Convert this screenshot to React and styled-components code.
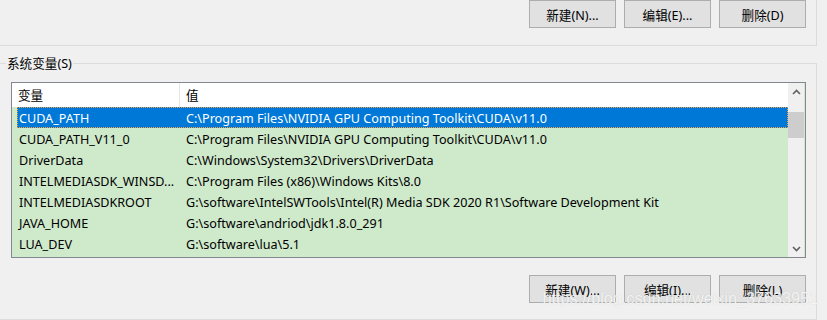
import React from 'react';
import styled, { createGlobalStyle } from 'styled-components';

const GlobalStyle = createGlobalStyle`
  html, body {
    margin: 0;
    padding: 0;
    background: #f0f0f0;
    overflow: hidden;
  }
  body {
    font-family: "Noto Sans", "Noto Sans CJK SC", sans-serif;
    font-size: 12.6px;
    color: #000;
  }
`;

const rows = [
    { name: 'CUDA_PATH', value: 'C:\\Program Files\\NVIDIA GPU Computing Toolkit\\CUDA\\v11.0', selected: true },
    { name: 'CUDA_PATH_V11_0', value: 'C:\\Program Files\\NVIDIA GPU Computing Toolkit\\CUDA\\v11.0' },
    { name: 'DriverData', value: 'C:\\Windows\\System32\\Drivers\\DriverData' },
    { name: 'INTELMEDIASDK_WINSD...', value: 'C:\\Program Files (x86)\\Windows Kits\\8.0' },
    { name: 'INTELMEDIASDKROOT', value: 'G:\\software\\IntelSWTools\\Intel(R) Media SDK 2020 R1\\Software Development Kit' },
    { name: 'JAVA_HOME', value: 'G:\\software\\andriod\\jdk1.8.0_291' },
    { name: 'LUA_DEV', value: 'G:\\software\\lua\\5.1' },
];

const App = () => {
    return (
        <>
        <GlobalStyle />
        <Page>
            <UserSection>
                <ButtonRow>
                    <Button>新建(N)...</Button>
                    <Button>编辑(E)...</Button>
                    <Button>删除(D)</Button>
                </ButtonRow>
            </UserSection>

            <GroupBox>
                <Legend>系统变量(S)</Legend>
                <ListView>
                    <ListBody>
                        <Header>
                            <HeaderCell $width={168} $divider>变量</HeaderCell>
                            <HeaderCell>值</HeaderCell>
                        </Header>
                        {rows.map((r) => (
                            <Row key={r.name} $selected={r.selected}>
                                <NameCell>{r.name}</NameCell>
                                <ValueCell>{r.value}</ValueCell>
                            </Row>
                        ))}
                    </ListBody>
                    <ScrollBar>
                        <Arrow>
                            <svg width="9" height="6" viewBox="0 0 9 6">
                                <path d="M1 5 L4.5 1.5 L8 5" fill="none" stroke="#606060" strokeWidth="1.6" />
                            </svg>
                        </Arrow>
                        <Track>
                            <Thumb />
                        </Track>
                        <Arrow>
                            <svg width="9" height="6" viewBox="0 0 9 6">
                                <path d="M1 1 L4.5 4.5 L8 1" fill="none" stroke="#606060" strokeWidth="1.6" />
                            </svg>
                        </Arrow>
                    </ScrollBar>
                </ListView>
                <ButtonRow $bottom>
                    <Button>新建(W)...</Button>
                    <Button>编辑(I)...</Button>
                    <Button>删除(L)</Button>
                </ButtonRow>
            </GroupBox>
            <Watermark>https://blog.csdn.net/weixin_37633951</Watermark>
        </Page>
        </>
    )
}

export default App

const Page = styled.div`
  position: relative;
  width: 827px;
  height: 320px;
`;

const UserSection = styled.div`
  box-sizing: border-box;
  width: 817px;
  height: 46px;
  border-right: 1px solid #dcdcdc;
  border-bottom: 1px solid #dcdcdc;
  padding-right: 10px;
`;

const ButtonRow = styled.div`
  display: flex;
  justify-content: flex-end;
  gap: 8px;
  margin-top: ${(p) => (p.$bottom ? '17px' : '0')};
`;

const Button = styled.button`
  box-sizing: border-box;
  width: 87px;
  height: 28px;
  margin: 0;
  padding: 0;
  background: #e1e1e1;
  border: 1px solid #adadad;
  font-family: "Noto Sans", "Noto Sans CJK SC", sans-serif;
  font-size: 12.6px;
  color: #000;
`;

const GroupBox = styled.fieldset`
  box-sizing: border-box;
  width: 819px;
  height: 265px;
  margin: 9px 0 0 -2px;
  padding: 10px 10px 0 12px;
  border: 1px solid #dcdcdc;
  min-inline-size: 0;
`;

const Legend = styled.legend`
  padding: 0 1px;
  margin-left: -5px;
  line-height: 17px;
  font-size: 12.6px;
`;

const ListView = styled.div`
  box-sizing: border-box;
  display: flex;
  width: 795px;
  height: 176px;
  border: 1px solid #828790;
  background: #cfe9cb;
  padding-right: 1px;
`;

const ListBody = styled.div`
  flex: 1;
  overflow: hidden;
`;

const Header = styled.div`
  display: flex;
  height: 24px;
  background: #fff;
`;

const HeaderCell = styled.div`
  box-sizing: border-box;
  flex: ${(p) => (p.$width ? `0 0 ${p.$width}px` : '1')};
  padding: 1px 0 0 6px;
  line-height: 23px;
  border-right: ${(p) => (p.$divider ? '1px solid #e5e5e5' : 'none')};
`;

const Row = styled.div`
  box-sizing: border-box;
  display: flex;
  height: 21px;
  margin-left: 5px;
  padding-top: 1px;
  align-items: center;
  white-space: nowrap;
  background: ${(p) => (p.$selected ? '#0078d7' : 'transparent')};
  color: ${(p) => (p.$selected ? '#fff' : '#000')};
  border: 1px dotted ${(p) => (p.$selected ? '#f4a040' : 'transparent')};
`;

const NameCell = styled.div`
  flex: 0 0 162px;
  padding-left: 1px;
  box-sizing: border-box;
`;

const ValueCell = styled.div`
  flex: 1;
  padding-left: 6px;
`;

const ScrollBar = styled.div`
  display: flex;
  flex-direction: column;
  width: 16px;
  background: #f0f0f0;
`;

const Arrow = styled.div`
  height: 17px;
  display: flex;
  align-items: center;
  justify-content: center;
`;

const Track = styled.div`
  flex: 1;
  padding-top: 12px;
`;

const Thumb = styled.div`
  height: 26px;
  background: #cdcdcd;
`;

const Watermark = styled.div`
  position: absolute;
  right: 9px;
  top: 289px;
  font-family: "Liberation Sans", Arial, sans-serif;
  font-size: 16.2px;
  color: rgba(255, 255, 255, 0.8);
  text-shadow: 0 0 1px rgba(150, 150, 150, 0.45);
  pointer-events: none;
`;
